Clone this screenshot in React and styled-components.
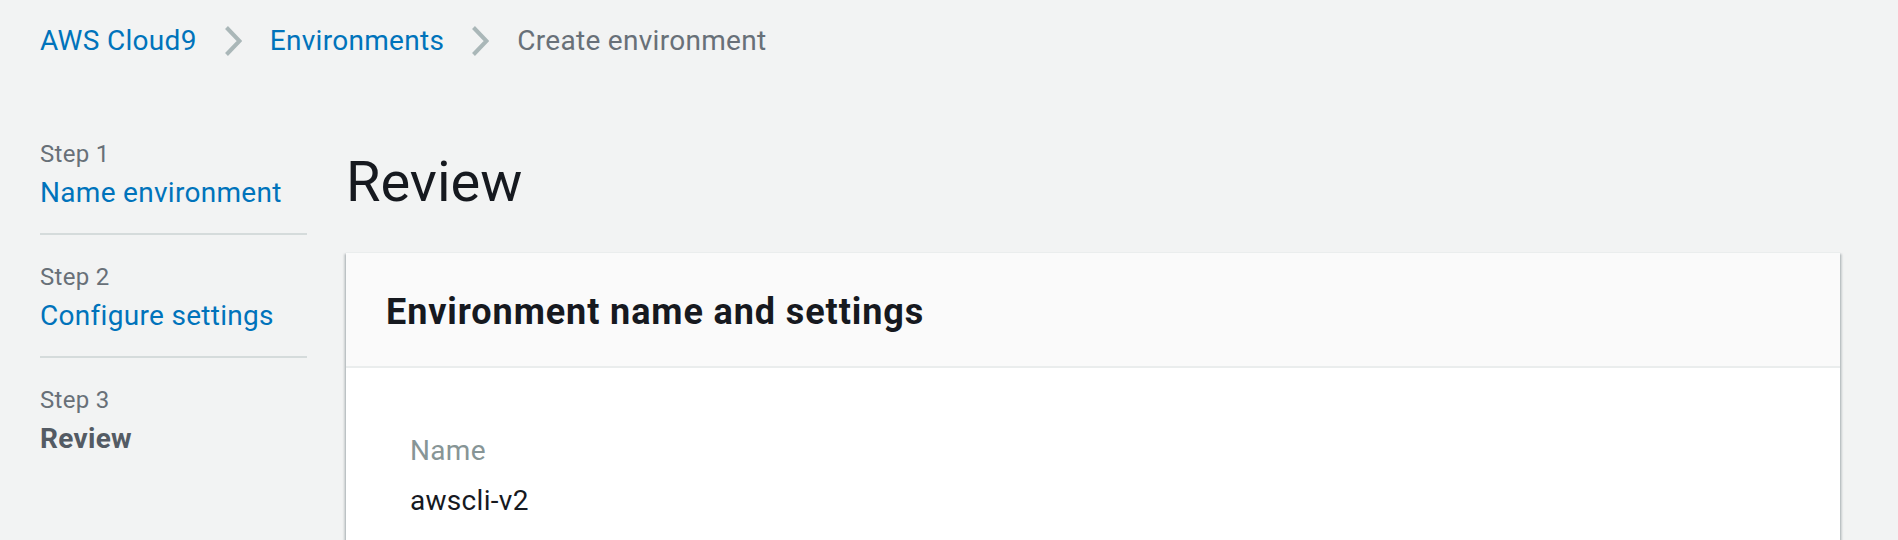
import React from "react";
import styled, { createGlobalStyle } from "styled-components";

const GlobalStyle = createGlobalStyle`
  html, body {
    margin: 0;
    padding: 0;
    background: #f2f3f3;
  }
  body {
    font-family: Roboto, "Open Sans", "Liberation Sans", sans-serif;
    color: #16191f;
    letter-spacing: 0.3px;
    -webkit-font-smoothing: antialiased;
  }
  * { box-sizing: border-box; }
`;

const Page = styled.div`
  padding: 21px 58px 0 40px;
  min-height: 540px;
  overflow: hidden;
`;

const Breadcrumbs = styled.nav`
  display: flex;
  align-items: center;
  height: 40px;
  font-size: 28px;
  line-height: 40px;
`;

const Crumb = styled.a`
  color: ${(p) => (p.$current ? "#687078" : "#0073bb")};
  text-decoration: none;
  white-space: nowrap;
`;

const Chevron = styled.svg`
  display: block;
  width: 18px;
  height: 30px;
  margin: 0 28px 0 27px;
  flex: none;
`;

const Layout = styled.div`
  display: grid;
  grid-template-columns: 267px 1fr;
  column-gap: 39px;
  margin-top: 51px;
`;

const Steps = styled.ol`
  list-style: none;
  margin: 0;
  padding: 0;
`;

const StepItem = styled.li`
  padding: 24px 0 20px;
  border-bottom: 2px solid ${(p) => (p.$last ? "transparent" : "#d5dbdb")};
`;

const StepLabel = styled.div`
  font-size: 24px;
  line-height: 36px;
  color: #687078;
`;

const StepTitle = styled.a`
  display: block;
  margin-top: 1px;
  font-size: 28px;
  line-height: 40px;
  text-decoration: none;
  color: ${(p) => (p.$active ? "#545b64" : "#0073bb")};
  font-weight: ${(p) => (p.$active ? 700 : 400)};
  white-space: nowrap;
`;

const Main = styled.main`
  padding-top: 38px;
`;

const Heading = styled.h1`
  margin: 0 0 38px;
  font-size: 56px;
  line-height: 64px;
  font-weight: 400;
  letter-spacing: 0;
  color: #16191f;
`;

const Card = styled.section`
  background: #ffffff;
  border-top: 1px solid #eaeded;
  box-shadow: 0 2px 2px 0 rgba(0, 28, 36, 0.3),
    2px 2px 2px 0 rgba(0, 28, 36, 0.15),
    -2px 2px 2px 0 rgba(0, 28, 36, 0.15);
`;

const CardHeader = styled.header`
  background: #fafafa;
  border-bottom: 2px solid #eaeded;
  padding: 35px 40px 30px;
`;

const CardTitle = styled.h2`
  margin: 0;
  font-size: 36px;
  line-height: 48px;
  font-weight: 700;
  letter-spacing: 0.9px;
  color: #16191f;
`;

const CardBody = styled.div`
  padding: 63px 40px 60px 64px;
`;

const FieldLabel = styled.div`
  font-size: 28px;
  line-height: 40px;
  color: #879596;
  margin-bottom: 10px;
`;

const FieldValue = styled.div`
  font-size: 28px;
  line-height: 40px;
  color: #16191f;
`;

const ChevronIcon = () => (
  <Chevron viewBox="0 0 18 30" aria-hidden="true">
    <polyline
      points="2.5,1.5 15.5,15 2.5,28.5"
      fill="none"
      stroke="#aab7b8"
      strokeWidth="4"
    />
  </Chevron>
);

const steps = [
  { label: "Step 1", title: "Name environment" },
  { label: "Step 2", title: "Configure settings" },
  { label: "Step 3", title: "Review", active: true },
];

export default function App() {
  return (
    <>
      <GlobalStyle />
      <Page>
        <Breadcrumbs>
          <Crumb href="#">AWS Cloud9</Crumb>
          <ChevronIcon />
          <Crumb href="#">Environments</Crumb>
          <ChevronIcon />
          <Crumb $current>Create environment</Crumb>
        </Breadcrumbs>
        <Layout>
          <Steps>
            {steps.map((s, i) => (
              <StepItem key={s.label} $last={i === steps.length - 1}>
                <StepLabel>{s.label}</StepLabel>
                <StepTitle href={s.active ? undefined : "#"} $active={s.active}>
                  {s.title}
                </StepTitle>
              </StepItem>
            ))}
          </Steps>
          <Main>
            <Heading>Review</Heading>
            <Card>
              <CardHeader>
                <CardTitle>Environment name and settings</CardTitle>
              </CardHeader>
              <CardBody>
                <FieldLabel>Name</FieldLabel>
                <FieldValue>awscli-v2</FieldValue>
              </CardBody>
            </Card>
          </Main>
        </Layout>
      </Page>
    </>
  );
}
